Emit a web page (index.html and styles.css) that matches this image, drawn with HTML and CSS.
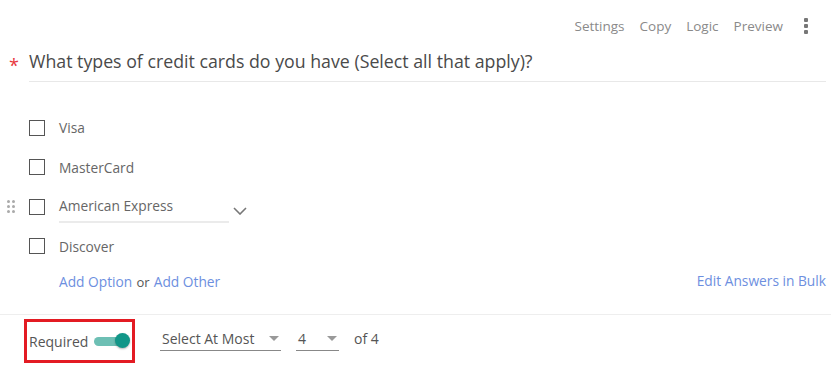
FILE: index.html
```html
<!DOCTYPE html>
<html>
<head>
<meta charset="utf-8">
<link rel="stylesheet" href="styles.css">
</head>
<body>
<div class="card">
  <div class="toolbar">
    <span class="tool">Settings</span>
    <span class="tool">Copy</span>
    <span class="tool">Logic</span>
    <span class="tool">Preview</span>
    <span class="kebab"><i></i><i></i><i></i></span>
  </div>
  <div class="question">
    <span class="star">*</span>
    <div class="qtext">What types of credit cards do you have (Select all that apply)?</div>
  </div>
  <ul class="options">
    <li class="opt"><span class="box"></span><span class="label">Visa</span></li>
    <li class="opt"><span class="box"></span><span class="label">MasterCard</span></li>
    <li class="opt active">
      <span class="handle"><i></i><i></i><i></i><i></i><i></i><i></i></span>
      <span class="box"></span>
      <span class="label edit">American Express</span>
      <svg class="chev" width="14" height="8" viewBox="0 0 14 8"><path d="M1 1 L7 7 L13 1" fill="none" stroke="#777" stroke-width="1.6"/></svg>
    </li>
    <li class="opt"><span class="box"></span><span class="label">Discover</span></li>
  </ul>
  <div class="addrow">
    <div class="adds"><a class="link">Add Option</a> <span class="or">or</span> <a class="link">Add Other</a></div>
    <a class="link">Edit Answers in Bulk</a>
  </div>
  <div class="footer">
    <div class="required">
      <span class="req-label">Required</span>
      <span class="switch"><span class="track"></span><span class="knob"></span></span>
    </div>
    <div class="select sel-mode"><span>Select At Most</span><span class="caret"></span></div>
    <div class="select sel-num"><span>4</span><span class="caret"></span></div>
    <span class="of">of 4</span>
  </div>
</div>
</body>
</html>
```

FILE: styles.css
```css
* { box-sizing: border-box; }
html, body { margin: 0; padding: 0; background: #fff; }
body {
  width: 831px;
  height: 368px;
  overflow: hidden;
  font-family: "Open Sans", "Noto Sans", sans-serif;
  color: #666;
}
.card { width: 831px; }
.toolbar {
  display: flex;
  justify-content: flex-end;
  align-items: center;
  height: 26px;
  margin-top: 13px;
  padding-right: 23px;
  font-size: 13.5px;
  color: #8a8a8a;
}
.tool { margin-left: 15px; }
.kebab {
  display: flex;
  flex-direction: column;
  gap: 2px;
  margin-left: 21px;
  width: 4px;
}
.kebab i { display: block; width: 4px; height: 4px; background: #777; border-radius: 1px; }
.question {
  display: flex;
  align-items: flex-start;
  margin-top: 8px;
}
.star {
  width: 29px;
  padding-left: 9px;
  color: #e8373d;
  font-size: 18px;
  line-height: 30px;
  padding-top: 3px;
}
.qtext {
  flex: 1;
  margin-right: 5px;
  font-size: 17.75px;
  line-height: 28px;
  color: #4a4a4a;
  padding-bottom: 6px;
  border-bottom: 1px solid #e8e8e8;
}
.options {
  list-style: none;
  margin: 26px 0 0 0;
  padding: 0 0 0 29px;
}
.opt {
  position: relative;
  display: flex;
  align-items: center;
  height: 39.5px;
}
.box {
  width: 16px;
  height: 16px;
  border: 1.5px solid #555;
  margin-right: 14px;
}
.label { font-size: 13.75px; color: #666; }
.label.edit {
  width: 170px;
  padding-bottom: 6px;
  margin-top: 6px;
  border-bottom: 2px solid #ebebeb;
}
.chev { margin-left: 4px; margin-top: 8px; }
.handle {
  position: absolute;
  left: -22px;
  top: 13px;
  display: grid;
  grid-template-columns: 3px 3px;
  gap: 2px 2px;
}
.handle i { display: block; width: 3px; height: 3px; background: #aaa; border-radius: 50%; }
.addrow {
  display: flex;
  justify-content: space-between;
  align-items: center;
  padding: 0 5px 0 59px;
  height: 29px;
  margin-bottom: 19px;
}
.link { color: #6d8fe0; font-size: 13.75px; }
.or { color: #555; font-size: 13px; }
.footer {
  display: flex;
  align-items: flex-start;
  height: 52px;
  border-top: 1px solid #eee;
  padding-top: 4px;
}
.required {
  display: flex;
  align-items: center;
  margin-left: 24px;
  width: 111px;
  height: 44px;
  border: 3px solid #e31b23;
  padding-left: 2px;
}
.req-label { font-size: 14px; color: #555; }
.switch {
  position: relative;
  width: 36px;
  height: 16px;
  margin-left: 6px;
}
.track {
  position: absolute;
  left: 0; top: 4px;
  width: 31px; height: 9px;
  border-radius: 5px;
  background: #6dbfb4;
}
.knob {
  position: absolute;
  right: 0; top: 0;
  width: 15px; height: 15px;
  border-radius: 50%;
  background: #119688;
  box-shadow: 0 1px 2px rgba(0,0,0,0.3);
}
.select {
  display: flex;
  align-items: center;
  justify-content: space-between;
  height: 24px;
  margin-top: 8px;
  border-bottom: 1px solid #888;
  font-size: 14px;
  color: #555;
  padding-left: 2px;
  padding-right: 2px;
}
.sel-mode { width: 121px; margin-left: 25px; }
.sel-num { width: 43px; margin-left: 15px; }
.caret {
  width: 0; height: 0;
  border-left: 5px solid transparent;
  border-right: 5px solid transparent;
  border-top: 5px solid #999;
}
.of { font-size: 14px; color: #555; margin-left: 15px; margin-top: 10px; line-height: 20px; }
```
